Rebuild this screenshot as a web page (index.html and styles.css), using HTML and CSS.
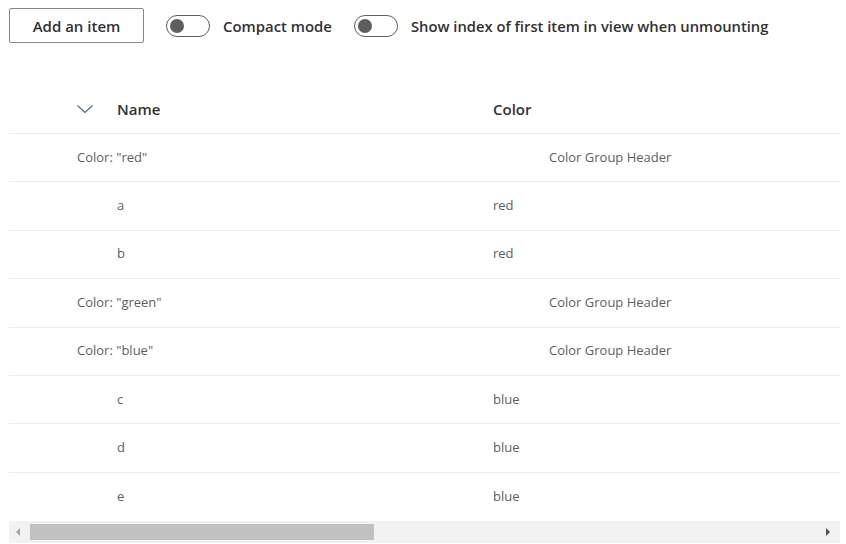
FILE: index.html
```html
<!DOCTYPE html>
<html>
<head>
<meta charset="utf-8">
<link rel="stylesheet" href="styles.css">
</head>
<body>
<div class="page">
  <div class="toolbar">
    <button class="btn">Add an item</button>
    <div class="toggle-group">
      <span class="toggle"><span class="thumb"></span></span>
      <span class="toggle-label">Compact mode</span>
    </div>
    <div class="toggle-group">
      <span class="toggle"><span class="thumb"></span></span>
      <span class="toggle-label long">Show index of first item in view when unmounting</span>
    </div>
  </div>
  <div class="list">
    <div class="header">
      <span class="chev"><svg width="16" height="8" viewBox="0 0 16 8"><polyline points="0.5,0.5 8,7.5 15.5,0.5" fill="none" stroke="#4a6584" stroke-width="1.1"/></svg></span>
      <span class="h-name">Name</span>
      <span class="h-color">Color</span>
    </div>
    <div class="row group"><span class="g-title">Color: "red"</span><span class="g-sub">Color Group Header</span></div>
    <div class="row item"><span class="c-name">a</span><span class="c-color">red</span></div>
    <div class="row item"><span class="c-name">b</span><span class="c-color">red</span></div>
    <div class="row group"><span class="g-title">Color: "green"</span><span class="g-sub">Color Group Header</span></div>
    <div class="row group"><span class="g-title">Color: "blue"</span><span class="g-sub">Color Group Header</span></div>
    <div class="row item"><span class="c-name">c</span><span class="c-color">blue</span></div>
    <div class="row item"><span class="c-name">d</span><span class="c-color">blue</span></div>
    <div class="row item"><span class="c-name">e</span><span class="c-color">blue</span></div>
    <div class="scrollbar">
      <span class="arrow left"></span>
      <span class="track"><span class="sthumb"></span></span>
      <span class="arrow right"></span>
    </div>
  </div>
</div>
</body>
</html>
```
FILE: styles.css
```css
html, body {
  margin: 0;
  padding: 0;
  background: #ffffff;
}
body {
  font-family: "Open Sans", "Noto Sans", sans-serif;
  color: #323130;
  overflow: hidden;
}
.page {
  padding: 8px 6px 0 9px;
  width: 831px;
}
.toolbar {
  display: flex;
  align-items: center;
  height: 35px;
  gap: 22px;
}
.btn {
  box-sizing: border-box;
  width: 135px;
  height: 35px;
  border: 1px solid #8a8886;
  border-radius: 2px;
  background: #fff;
  color: #323130;
  font-family: inherit;
  font-size: 15px;
  font-weight: 600;
  padding: 1px 0 0 0;
  margin: 0;
}
.toggle-group {
  display: flex;
  align-items: center;
  gap: 13px;
}
.toggle {
  box-sizing: border-box;
  width: 44px;
  height: 22px;
  border: 1px solid #605e5c;
  border-radius: 11px;
  display: flex;
  align-items: center;
  padding-left: 3px;
}
.thumb {
  width: 14px;
  height: 14px;
  border-radius: 50%;
  background: #605e5c;
}
.toggle-label {
  font-size: 14.9px;
  font-weight: 600;
  color: #323130;
  padding-top: 1px;
}
.toggle-label.long { font-size: 14.75px; }
.list {
  margin-top: 42px;
}
.header {
  position: relative;
  height: 48px;
  border-bottom: 1px solid #edebe9;
  font-size: 15px;
  font-weight: 600;
  display: flex;
  align-items: center;
}
.chev {
  width: 16px;
  margin-left: 68px;
  display: flex;
  align-items: center;
  height: 8px;
}
.chev svg { display: block; }
.h-name { margin-left: 24px; width: 376px; }
.row {
  box-sizing: border-box;
  height: 48.4px;
  border-bottom: 1px solid #edebe9;
  display: flex;
  align-items: center;
  font-size: 13px;
  color: #605e5c;
  padding-bottom: 2px;
}
.row:nth-last-child(2) { border-bottom: none; }
.g-title { margin-left: 68px; width: 472px; }
.c-name { margin-left: 108px; width: 376px; }
.scrollbar {
  height: 22px;
  background: #f1f1f1;
  display: flex;
  align-items: center;
}
.arrow {
  width: 0;
  height: 0;
  border-top: 4px solid transparent;
  border-bottom: 4px solid transparent;
}
.arrow.left {
  border-right: 4px solid #a3a3a3;
  margin-left: 7px;
  margin-right: 10px;
}
.arrow.right {
  border-left: 4px solid #505050;
  margin-left: 6px;
  margin-right: 10px;
}
.track {
  flex: 1;
  height: 16px;
  display: flex;
}
.sthumb {
  width: 344px;
  height: 16px;
  background: #c1c1c1;
}
```
